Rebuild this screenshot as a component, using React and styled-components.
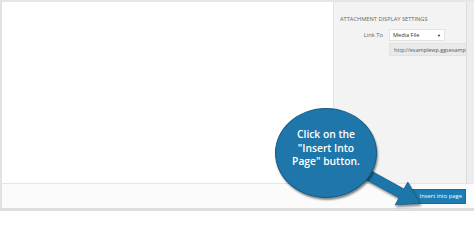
import React from "react";
import styled, { createGlobalStyle } from "styled-components";

const GlobalStyle = createGlobalStyle`
  html, body {
    margin: 0;
    padding: 0;
    background: #ffffff;
  }
  body {
    font-family: "Open Sans", "Liberation Sans", sans-serif;
  }
`;

const Frame = styled.div`
  position: relative;
  width: 474px;
  height: 211px;
  overflow: hidden;
  display: grid;
  grid-template-rows: 2px 1fr 25px 3px;
  background: #ffffff;
`;

const TopStrip = styled.div`
  background: #e6e6e6;
`;

const Body = styled.div`
  display: flex;
  min-height: 0;
`;

const Main = styled.div`
  flex: 1;
  background: #ffffff;
  border-left: 2px solid #e2e2e2;
`;

const Sidebar = styled.aside`
  width: 126px;
  background: #f3f3f3;
  border-left: 1px solid #e4e4e4;
  padding: 13px 0 0 6px;
  overflow: hidden;
  display: flex;
  flex-direction: column;
`;

const Gutter = styled.div`
  width: 7px;
  background: #ededed;
  border-left: 1px solid #dcdcdc;
`;

const Heading = styled.h3`
  margin: 0 0 6px;
  font-size: 5.7px;
  line-height: 8px;
  font-weight: 400;
  text-transform: uppercase;
  color: #666666;
  white-space: nowrap;
`;

const Field = styled.div`
  display: flex;
  align-items: center;
  gap: 6px;
  margin-bottom: 2px;
`;

const Label = styled.span`
  width: 43px;
  text-align: right;
  font-size: 5.8px;
  color: #666666;
`;

const Select = styled.div`
  width: 56px;
  height: 12px;
  box-sizing: border-box;
  background: #ffffff;
  border: 1px solid #e4e4e4;
  display: flex;
  align-items: center;
  justify-content: space-between;
  padding: 0 3px;
  font-size: 5.6px;
  color: #333333;
`;

const Caret = styled.span`
  font-size: 4px;
  color: #222222;
`;

const UrlBox = styled.div`
  margin-left: 49px;
  height: 13px;
  box-sizing: border-box;
  background: #eaeaea;
  border: 1px solid #e2e2e2;
  border-right: none;
  display: flex;
  align-items: center;
  padding-left: 4px;
  font-size: 5.4px;
  color: #555555;
  white-space: nowrap;
  overflow: hidden;
`;

const Toolbar = styled.div`
  background: #fbfbfb;
  border-top: 1px solid #e6e6e6;
  border-left: 2px solid #e2e2e2;
  display: flex;
  align-items: center;
  justify-content: flex-end;
  padding-right: 8px;
`;

const InsertButton = styled.button`
  height: 15px;
  padding: 0 3px 0 8px;
  border: 1px solid #166b9c;
  background: #1c7db4;
  color: #ffffff;
  font-family: "Open Sans", "Liberation Sans", sans-serif;
  font-size: 5.8px;
  line-height: 1;
  cursor: pointer;
  margin-top: 1px;
`;

const BottomStrip = styled.div`
  background: #dedede;
`;

const ArrowLayer = styled.svg`
  position: absolute;
  inset: 0;
  pointer-events: none;
`;

const Bubble = styled.div`
  position: absolute;
  left: 275px;
  top: 108px;
  width: 102px;
  height: 90px;
  box-sizing: border-box;
  border-radius: 50%;
  background: #1e76aa;
  border: 1px solid #165d88;
  box-shadow: 1px 2px 2px rgba(0, 0, 0, 0.45);
  display: flex;
  flex-direction: column;
  align-items: center;
  justify-content: center;
  padding-bottom: 9px;
  color: #ffffff;
  font-size: 10.3px;
  font-weight: 600;
  line-height: 13.5px;
  text-align: center;
`;

const App = () => {
  return (
    <>
      <GlobalStyle />
      <Frame>
        <TopStrip />
        <Body>
          <Main />
          <Sidebar>
            <Heading>Attachment Display Settings</Heading>
            <Field>
              <Label>Link To</Label>
              <Select>
                Media File
                <Caret>▼</Caret>
              </Select>
            </Field>
            <UrlBox>http://examplewp.ggsexampl</UrlBox>
          </Sidebar>
          <Gutter />
        </Body>
        <Toolbar>
          <InsertButton>Insert into page</InsertButton>
        </Toolbar>
        <BottomStrip />

        <ArrowLayer width="474" height="211" viewBox="0 0 474 211">
          <defs>
            <filter id="arrowShadow" x="-10%" y="-10%" width="130%" height="130%">
              <feDropShadow dx="1" dy="2" stdDeviation="1" floodColor="#000" floodOpacity="0.45" />
            </filter>
          </defs>
          <polygon
            points="347.6,169.4 352.4,160.6 403.9,189 407.8,182 420,203.5 395.2,204.8 399.1,197.8"
            fill="#1e76aa"
            stroke="#165d88"
            strokeWidth="0.8"
            filter="url(#arrowShadow)"
          />
        </ArrowLayer>
        <Bubble>
          <span>Click on the</span>
          <span>"Insert Into</span>
          <span>Page" button.</span>
        </Bubble>
      </Frame>
    </>
  );
};

export default App;
